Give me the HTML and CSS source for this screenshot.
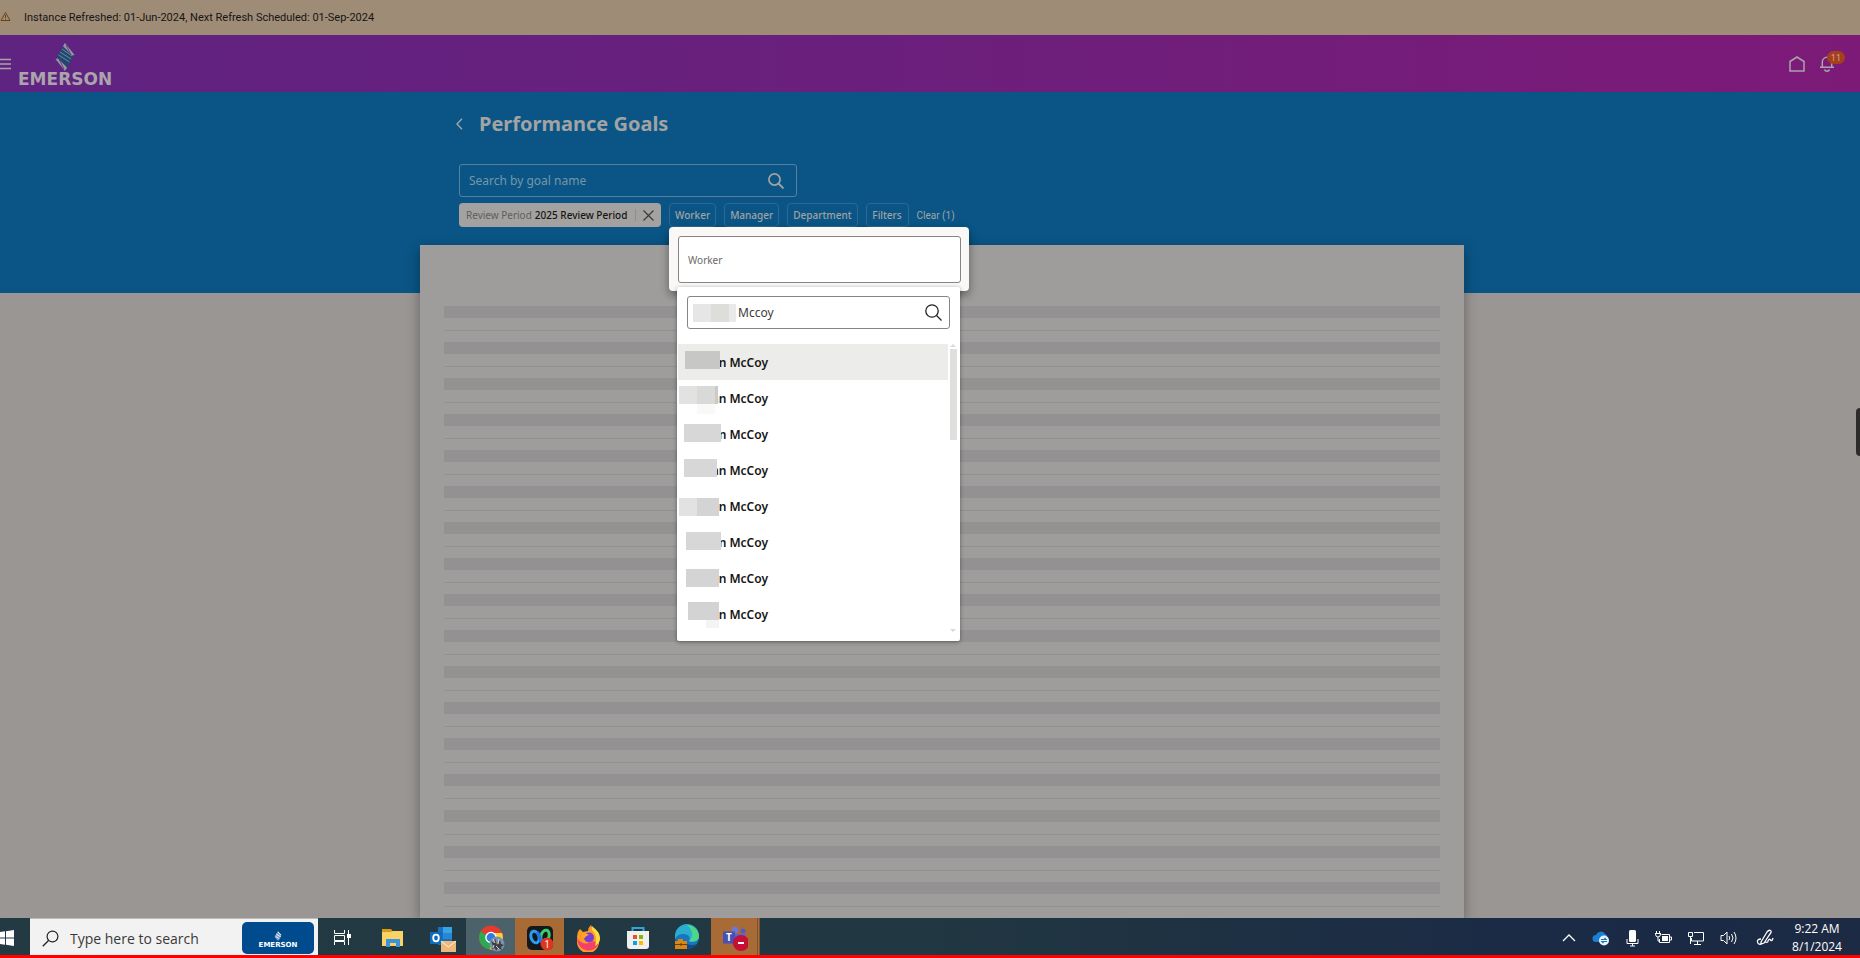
FILE: index.html
```html
<!DOCTYPE html>
<html lang="en">
<head>
    <meta charset="UTF-8">
    <meta name="viewport" content="width=device-width, initial-scale=1.0">
    <title>Performance Goals</title>
    <link rel="stylesheet" href="styles.css">
</head>
<body>

    <!-- Instance notice -->
    <div class="notice">
        <svg class="notice-icon" width="11" height="11" viewBox="0 0 11 11"><path d="M5.500 .5L10 8.500H1Z" fill="none" stroke="#6b4312"/><path d="M5.500 3v3M5.500 6.700v1" stroke="#6b4312"/></svg>
        <span>Instance Refreshed: 01-Jun-2024, Next Refresh Scheduled: 01-Sep-2024</span>
    </div>

    <!-- Global header -->
    <header class="topbar">
        <button class="icon-btn menu-btn" aria-label="Menu">
            <svg width="11" height="12" viewBox="0 0 11 12"><path d="M0 1.500h11M0 6h11M0 10.500h11" stroke="#a9a4ab" stroke-width="1.400"/></svg>
        </button>
        <a class="logo" href="#" aria-label="Emerson">
            <svg width="20" height="28" viewBox="0 0 20 28">
                <path d="M10 0L19.500 12 10 28 .5 16Z" fill="#24466f"/>
                <path d="M10 0L19.500 12 17 12.500 8 3Z" fill="#9c98a2"/>
                <path d="M.5 16L3 15.500 12 24.500 10 28Z" fill="#9c98a2"/>
                <path d="M7 6l10 7M5 9l11 7M3.500 12l11 7" stroke="#5f8fa3"/>
                <path d="M11 2l5 10M4 16l5 10" stroke="#612280" stroke-width=".8"/>
            </svg>
            <span class="logo-text">EMERSON</span>
        </a>
        <div class="topbar-actions">
            <button class="icon-btn" aria-label="Home">
                <svg width="16" height="16" viewBox="0 0 16 16"><path d="M1 5.500L8 1l7 4.500V15H1Z" fill="none" stroke="#aaa3aa" stroke-width="1.500"/></svg>
            </button>
            <button class="icon-btn bell-btn" aria-label="Notifications">
                <svg width="14" height="16" viewBox="0 0 14 16"><path d="M0 11.300h14M2.300 11V6a4.700 4.700 0 0 1 9.400 0v5" fill="none" stroke="#aaa3aa" stroke-width="1.500"/><path d="M4.500 13.500a2.600 2.300 0 0 0 5 0" fill="none" stroke="#aaa3aa" stroke-width="1.500"/></svg>
                <span class="badge">11</span>
            </button>
        </div>
    </header>

    <main class="page">
        <section class="hero">
            <div class="hero-inner">
                <div class="title-row">
                    <button class="icon-btn" aria-label="Back">
                        <svg width="8" height="12" viewBox="0 0 8 12"><path d="M7 .8L2 6l5 5.200" fill="none" stroke="#a2a3a3" stroke-width="1.400"/></svg>
                    </button>
                    <h1>Performance Goals</h1>
                </div>

                <div class="goal-search">
                    <input type="text" aria-label="Search by goal name" placeholder="Search by goal name">
                    <svg width="16" height="16" viewBox="0 0 16 16"><circle cx="6.500" cy="6.500" r="5.600" fill="none" stroke="#a2a3a3" stroke-width="1.700"/><path d="M10.500 10.500l5 5" stroke="#a2a3a3" stroke-width="1.800"/></svg>
                </div>

                <!-- Filter chips -->
                <div class="chips">
                    <div class="chip-selected">
                        <span class="chip-label">Review Period</span>
                        <span class="chip-value">2025 Review Period</span>
                        <button class="icon-btn chip-close" aria-label="Remove">
                            <svg width="11" height="11" viewBox="0 0 11 11"><path d="M.5.5l10 10M10.500.5l-10 10" stroke="#3b3a39" stroke-width="1.200"/></svg>
                        </button>
                    </div>
                    <div class="chip-anchor">
                        <button class="chip">Worker</button>

                        <!-- Worker popup -->
                        <div class="popup">
                            <label class="worker-field" for="worker-search">Worker</label>
                            <div class="dropdown">
                                <div class="worker-search">
                                    <span class="blur blur-input"></span>
                                    <input type="text" id="worker-search" value="Mccoy">
                                    <svg width="17" height="17" viewBox="0 0 17 17"><circle cx="7" cy="7" r="6.200" fill="none" stroke="#222" stroke-width="1.300"/><path d="M11.500 11.500l5 5" stroke="#222" stroke-width="1.300"/></svg>
                                </div>
                                <div class="results">
                                    <ul>
                                        <li class="active"><span class="name">n McCoy</span><span class="blur b1"></span></li>
                                        <li><span class="name">an McCoy</span><span class="blur b2"></span></li>
                                        <li><span class="name">n McCoy</span><span class="blur b3"></span></li>
                                        <li><span class="name">an McCoy</span><span class="blur b4"></span></li>
                                        <li><span class="name">n McCoy</span><span class="blur b5"></span></li>
                                        <li><span class="name">n McCoy</span><span class="blur b6"></span></li>
                                        <li><span class="name">n McCoy</span><span class="blur b7"></span></li>
                                        <li><span class="name">n McCoy</span><span class="blur b8"></span></li>
                                    </ul>
                                    <div class="scrollbar">
                                        <span class="arrow-up"></span>
                                        <span class="thumb"></span>
                                        <span class="arrow-down"></span>
                                    </div>
                                </div>
                            </div>
                        </div>
                    </div>
                    <button class="chip">Manager</button>
                    <button class="chip">Department</button>
                    <button class="chip">Filters</button>
                    <button class="clear">Clear (1)</button>
                </div>
            </div>
        </section>

        <!-- Loading skeleton -->
        <section class="sheet">
            <div class="row"></div>
            <div class="row"></div>
            <div class="row"></div>
            <div class="row"></div>
            <div class="row"></div>
            <div class="row"></div>
            <div class="row"></div>
            <div class="row"></div>
            <div class="row"></div>
            <div class="row"></div>
            <div class="row"></div>
            <div class="row"></div>
            <div class="row"></div>
            <div class="row"></div>
            <div class="row"></div>
            <div class="row"></div>
            <div class="row"></div>
        </section>
        <div class="side-handle"></div>
    </main>

    <!-- Taskbar -->
    <footer class="taskbar">
        <button class="start" aria-label="Start">
            <svg width="14" height="16" viewBox="0 0 14 16"><path d="M0 2l5-.7v6.200H0ZM6 1.200L14 0v7.500H6ZM0 8.500h5v6.200L0 14ZM6 8.500h8V16l-8-1.200Z" fill="#fff"/></svg>
        </button>
        <div class="task-search">
            <svg width="17" height="17" viewBox="0 0 17 17"><circle cx="10.500" cy="6.500" r="5.400" fill="none" stroke="#222" stroke-width="1.200"/><path d="M6.500 10.500L.8 16.200" stroke="#222" stroke-width="1.300"/></svg>
            <input type="text" aria-label="Type here to search" placeholder="Type here to search">
            <div class="tile">
                <svg width="8" height="10" viewBox="0 0 8 10"><path d="M4 0l3.500 4L4 10 .5 6Z" fill="#7d9cc9"/><path d="M2 3l5 3M1.500 5l4 3M4 1l3 3" stroke="#fff" stroke-width=".8"/></svg>
                <span>EMERSON</span>
            </div>
        </div>

        <div class="apps">
            <button class="app" aria-label="Task View">
                <svg width="28" height="28" viewBox="0 0 28 28"><g fill="none" stroke="#fff"><path d="M4.500 6v3.500h10V6M4.500 21v-3.500h10V21M4.500 11.500h10v5h-10zM18.500 6v15"/></g><path d="M17 10h4v4h-4z" fill="#fff"/></svg>
            </button>
            <button class="app" aria-label="File Explorer">
                <svg width="28" height="28" viewBox="0 0 28 28"><path d="M3 5h9l1.500 2H24v4H3Z" fill="#dd9a12"/><path d="M3 8h9l2-1h10v15H3Z" fill="#fbd266"/><path d="M7 23v-8h14v8h-4v-4h-6v4Z" fill="#3b93da"/></svg>
            </button>
            <button class="app" aria-label="Outlook">
                <svg width="28" height="28" viewBox="0 0 28 28"><path d="M10 3h14v18H10Z" fill="#1a6fc0"/><path d="M15 3h9v6h-9Z" fill="#35a5e6"/><path d="M15 9h9v6h-9Z" fill="#2a86d2"/><path d="M2 8h12v12H2Z" fill="#0f6cbd"/><ellipse cx="8" cy="14" rx="2.800" ry="3.300" fill="none" stroke="#fff" stroke-width="1.800"/><path d="M13 17h15v11H13Z" fill="#efb878"/><path d="M13 17l7.500 6L28 17" fill="none" stroke="#fff3df"/></svg>
            </button>
            <button class="app app-open" aria-label="Chrome">
                <svg width="28" height="28" viewBox="0 0 28 28"><circle cx="14" cy="13.500" r="12" fill="#e33b2e"/><path d="M14 13.500L3.600 7.500A12 12 0 0 0 13 25.500Z" fill="#2da94f"/><path d="M14 13.500l-1 12A12 12 0 0 0 25 9H15Z" fill="#fdd23a"/><circle cx="14" cy="13.500" r="5.800" fill="#fff"/><circle cx="14" cy="13.500" r="4.400" fill="#2f7de1"/><circle cx="20" cy="20" r="7.500" fill="#7793a8"/><path d="M14 17l3 2 1-5 2 7 3-5 1 4 3 1-3 2 1 3-4-2-2 3-1-3-3 1 1-3Z" fill="#3f3c44"/><path d="M16 15l2 4M22 15l-1 5M19 22l3 3M17 21l-1 3" stroke="#d8cfc5"/></svg>
            </button>
            <button class="app app-alert" aria-label="Webex">
                <svg width="28" height="28" viewBox="0 0 28 28"><rect x="1" y="2" width="26" height="24" rx="5" fill="#15191c"/><ellipse cx="9" cy="13" rx="4" ry="6" transform="rotate(-18 9 13)" fill="none" stroke="#2b9df0" stroke-width="3"/><ellipse cx="19" cy="12" rx="4" ry="6" transform="rotate(18 19 12)" fill="none" stroke="#38cf6c" stroke-width="3"/><path d="M11 8q3 3 3 7 1 4 4 3" fill="none" stroke="#1f6df0" stroke-width="3"/><circle cx="21" cy="20" r="6.500" fill="#dd3620"/><text x="21" y="24" text-anchor="middle" font-size="10" fill="#fff">1</text></svg>
            </button>
            <button class="app" aria-label="Firefox">
                <svg width="28" height="28" viewBox="0 0 28 28"><path d="M5 5l3 3 5-1c0-3 2-5 3-6 1 3 3 4 5 5l1 2c2 3 3 6 2 10a11 11 0 0 1-22 0C2 12 2 8 5 5Z" fill="#ff9a25"/><path d="M2.500 12c0 3 1 5 4 6 4 3 8 1 12-1l5 3a11 11 0 0 1-21-3Z" fill="#f4416a"/><path d="M17 2c3 3 8 6 8 12 0 5-3 7-5 8 2-7 1-12-3-16Z" fill="#ffdb3f"/><circle cx="14" cy="13.500" r="5" fill="#7a3fd0"/><path d="M7 10c3-2 6 0 7 1-2 1-4 1-4 3-2 0-3-2-3-4Z" fill="#ffa62b"/></svg>
            </button>
            <button class="app" aria-label="Store">
                <svg width="28" height="28" viewBox="0 0 28 28"><path d="M8.500 8V4h11v4" fill="none" stroke="#2fa5de" stroke-width="2"/><path d="M3 7h22v15q0 3-3 3H6q-3 0-3-3Z" fill="#efefef"/><path d="M9 11h4v4H9Z" fill="#f25022"/><path d="M15 11h4v4h-4Z" fill="#7fba00"/><path d="M9 17h4v4H9Z" fill="#00a4ef"/><path d="M15 17h4v4h-4Z" fill="#ffb900"/></svg>
            </button>
            <button class="app" aria-label="Edge">
                <svg width="28" height="28" viewBox="0 0 28 28"><circle cx="14" cy="13" r="12" fill="#1676c4"/><path d="M2 12A12 12 0 0 1 26 12c0 6-7 7-10 5 2-3 0-7-5-7-4 0-7 1-9 5Z" fill="#2aaed0"/><path d="M14 1A12 12 0 0 1 26 13c-1 5-7 5-10 4 5-4 4-11-2-16Z" fill="#4fd58a"/><path d="M11 16c2 5 8 6 13 4-2 3-6 5-10 5-3-2-4-5-3-9Z" fill="#114a8b"/><path d="M5 17v-2h5v2M2 17h12v8H2Z" fill="#d98613"/><path d="M2 20.500h12M8 19v3" stroke="#6e3c07"/></svg>
            </button>
            <button class="app app-alert app-stack" aria-label="Teams">
                <svg width="28" height="28" viewBox="0 0 28 28"><circle cx="15" cy="6" r="3.500" fill="#6e78d4"/><circle cx="23" cy="7" r="2.500" fill="#5059c9"/><path d="M11 10h15v7q-2 6-8 6-6-1-7-6Z" fill="#5b64cc"/><path d="M3 7.500h12v12H3Z" fill="#4650b5"/><text x="9" y="17" text-anchor="middle" font-size="10" font-weight="700" fill="#fff">T</text><circle cx="21" cy="19" r="8" fill="#c50f35"/><path d="M18 19h6" stroke="#fff" stroke-width="2"/></svg>
            </button>
        </div>

        <div class="tray">
            <svg width="16" height="16" viewBox="0 0 16 16"><path d="M2 11l6-6 6 6" fill="none" stroke="#fff" stroke-width="1.300"/></svg>
            <svg width="18" height="16" viewBox="0 0 18 16"><path d="M4 12a3.500 3.500 0 0 1 0-7 5 5 0 0 1 9-1 3.500 3.500 0 0 1 2 5v3Z" fill="#1b7fd4"/><circle cx="12" cy="10.500" r="5" fill="#e8f2fa"/><path d="M9 9.500h5l-1.500-1.700M15 11.500h-5l1.500 1.700" fill="none" stroke="#1470b8" stroke-width="1.200"/></svg>
            <svg width="14" height="18" viewBox="0 0 14 18"><rect x="4" y="1" width="7" height="12" rx="1.500" fill="#fff"/><path d="M2 10v4.500h11V10M7.500 14v3M5 17h5" fill="none" stroke="#fff"/></svg>
            <svg width="18" height="16" viewBox="0 0 18 16"><path d="M7.500 4.500h8v8h-10V9M16 7h1.500v3H16M2.500 1v2M5.500 1v2M1 3.500h6M1.500 4q0 3 2.500 3t2.500-3M4 7v4h2" fill="none" stroke="#fff"/><path d="M8 6h6v5H8Z" fill="#fff"/></svg>
            <svg width="18" height="16" viewBox="0 0 18 16"><path d="M7 2.500h9.500v8.500h-12V8M10.500 11v3M7 14.500h7M1.500 2.500h4v4h-4ZM3.500 6.500V14" fill="none" stroke="#fff"/></svg>
            <svg width="18" height="16" viewBox="0 0 18 16"><path d="M1 5.500h2.500L7 2v12l-3.500-3.500H1Z" fill="none" stroke="#fff"/><path d="M9 6q1.500 2 0 4M11.500 4q3 4 0 8M14 2q4 6 0 12" fill="none" stroke="#fff"/></svg>
            <svg class="pen" width="18" height="18" viewBox="0 0 18 18"><path d="M5 13L11 3q2-2.500 3.500-1.500T14 5L8 14l-3 1ZM5 10q-4 0-3.500 3 .5 3 4 2M9 13q3 1 3-1 1-3 2.500-1t2.500-2" fill="none" stroke="#fff" stroke-width="1.300"/></svg>
        </div>
        <div class="clock">
            <span>9:22 AM</span>
            <span>8/1/2024</span>
        </div>
    </footer>

</body>
</html>
```

FILE: styles.css
```css
* {
    box-sizing: border-box;
}

body {
    margin: 0;
    height: 100vh;
    display: flex;
    flex-direction: column;
    overflow: hidden;
    background: #9a9694;
    font-family: "Noto Sans", "Open Sans", sans-serif;
    font-size: 10px;
    color: #161513;
}

button {
    font-family: inherit;
    background: none;
    border: 0;
    padding: 0;
}

input {
    font-family: inherit;
    border: 0;
    outline: 0;
    padding: 0;
    background: none;
    min-width: 0;
}

svg {
    display: block;
    flex: none;
}

.icon-btn {
    display: flex;
    align-items: center;
    justify-content: center;
}

/* Notice */
.notice {
    flex: none;
    height: 35px;
    display: flex;
    align-items: center;
    gap: 13px;
    background: #9e8c77;
    font-family: Roboto, sans-serif;
    font-size: 11px;
}

/* Header */
.topbar {
    flex: none;
    height: 57px;
    display: flex;
    align-items: center;
    padding-right: 16px;
    background: linear-gradient(90deg, #5f2381, #6c1f7c 50%, #7d1a78);
}

.logo {
    display: flex;
    flex-direction: column;
    align-items: center;
    margin-left: 7px;
    padding-top: 3px;
    text-decoration: none;
}

.logo-text {
    font-family: "DejaVu Sans", sans-serif;
    font-weight: 700;
    font-size: 17px;
    line-height: 16px;
    color: #aaa4ac;
}

.topbar-actions {
    display: flex;
    align-items: center;
    gap: 15px;
    margin-left: auto;
    padding-right: 10px;
}

.bell-btn {
    position: relative;
}

.badge {
    position: absolute;
    left: 7px;
    top: -5px;
    width: 18px;
    height: 13px;
    border-radius: 7px;
    background: #a5401b;
    color: #c2aaa0;
    font-size: 9px;
    line-height: 13px;
}

/* Page */
.page {
    flex: 1;
    min-height: 0;
    position: relative;
    display: flex;
    flex-direction: column;
}

.hero {
    flex: none;
    padding: 0 0 48px 24px;
    background: #0a5585;
}

.hero-inner {
    max-width: 1044px;
    height: 153px;
    margin: 0 auto;
    padding: 16px 36px 0 39px;
}

.title-row {
    display: flex;
    align-items: center;
    height: 32px;
    gap: 16px;
}

h1 {
    margin: 0;
    font-size: 20px;
    line-height: 32px;
    color: #a2a3a3;
}

.title-row .icon-btn {
    margin-left: -4px;
}

.goal-search {
    display: flex;
    align-items: center;
    width: 338px;
    height: 33px;
    margin-top: 24px;
    padding: 0 12px 0 9px;
    border: 1px solid #56809c;
    border-radius: 3px;
}

.goal-search input {
    flex: 1;
    font-size: 12px;
    color: #a2a3a3;
}

.goal-search input::placeholder {
    color: #7596aa;
    opacity: 1;
}

.chips {
    display: flex;
    align-items: center;
    gap: 8px;
    margin-top: 6px;
}

.chip-selected {
    display: flex;
    align-items: center;
    width: 202px;
    height: 24px;
    padding: 0 7px;
    border-radius: 4px;
    background: #a3a2a1;
    white-space: nowrap;
}

.chip-label {
    color: #5f5e5d;
    margin-right: 3px;
}

.chip-value {
    font-weight: 500;
}

.chip-close {
    margin-left: auto;
    height: 12px;
    padding-left: 7px;
    border-left: 1px solid #8f8e8d;
}

.chip {
    display: block;
    min-width: 43px;
    height: 24px;
    padding: 0 5px;
    border: 1px solid #2a6a93;
    border-radius: 4px;
    font-size: 10px;
    font-weight: 500;
    color: #a2a3a3;
}

.clear {
    font-family: Roboto, sans-serif;
    font-size: 10px;
    color: #a2a3a3;
}

/* Worker popup */
.chip-anchor {
    position: relative;
}

.popup {
    position: absolute;
    z-index: 2;
    top: 24px;
    left: 0;
    width: 300px;
    height: 64px;
    padding: 9px 8px 8px 9px;
    border-radius: 4px;
    background: #f9f8f6;
    box-shadow: 0 4px 10px rgba(0, 0, 0, 0.4);
}

.worker-field {
    display: flex;
    align-items: center;
    height: 47px;
    padding: 0 9px;
    border: 1px solid #868583;
    border-radius: 3px;
    background: #fff;
    color: #6b6967;
}

.dropdown {
    position: absolute;
    top: 60px;
    left: 8px;
    width: 283px;
    padding: 9px 2px 9px 1px;
    border-radius: 2px;
    background: #fff;
    box-shadow: 0 1px 4px rgba(0, 0, 0, 0.4);
}

.worker-search {
    position: relative;
    display: flex;
    align-items: center;
    height: 33px;
    margin: 0 8px 15px 9px;
    padding: 0 7px 0 50px;
    border: 1px solid #868583;
    border-radius: 3px;
}

.worker-search input {
    flex: 1;
    font-size: 12px;
    color: #3d3b39;
}

.results {
    display: flex;
}

.results ul {
    flex: 1;
    margin: 0;
    padding: 0;
    list-style: none;
}

.results li {
    position: relative;
    height: 36px;
    background: #fff;
}

.results .active {
    background: #ececea;
}

.name {
    display: block;
    width: 90px;
    font-size: 12px;
    font-weight: 600;
    line-height: 38px;
    text-align: right;
    white-space: nowrap;
}

/* Obscured first names */
.blur {
    position: absolute;
    height: 18px;
    top: 7px;
    left: 6px;
    width: 33px;
    background: #d7d7d7;
}

.blur-input {
    left: 5px;
    width: 43px;
    background: linear-gradient(90deg, #e6e6e6 18px, #ddddda 18px 36px, #e9e9e9 36px);
}

.b1 {
    left: 7px;
    width: 35px;
    background: #c7c7c5;
}

.b2 {
    top: 6px;
    left: 1px;
    width: 39px;
    background: linear-gradient(90deg, #e2e2e2 18px, #d9d9d8 18px 36px, #cacaca 36px);
}

.b2::after,
.b8::after {
    content: "";
    position: absolute;
    top: 18px;
    left: 18px;
    width: 18px;
    height: 10px;
    background: #f9f9f9;
}

.b3 {
    top: 8px;
    width: 37px;
}

.b5 {
    top: 10px;
    left: 1px;
    width: 40px;
    background: linear-gradient(90deg, #e2e2e2 18px, #d4d4d4 18px);
}

.b6 {
    top: 8px;
    left: 8px;
    width: 35px;
}

.b7 {
    top: 9px;
    left: 8px;
    background: #d4d4d4;
}

.b8 {
    top: 6px;
    left: 10px;
    width: 31px;
    background: #d3d3d3;
}

.b8::after {
    width: 13px;
    height: 8px;
    background: #f4f4f4;
}

.scrollbar {
    display: flex;
    flex-direction: column;
    align-items: center;
    width: 10px;
}

.arrow-up,
.arrow-down {
    border: 3px solid transparent;
    border-top-width: 0;
    border-bottom-color: #d9d9d8;
}

.arrow-down {
    margin-top: auto;
    border-width: 3px 3px 0;
    border-color: #d9d9d8 transparent transparent;
}

.thumb {
    width: 7px;
    height: 91px;
    margin-top: 2px;
    background: #dfdfde;
}

/* Loading skeleton */
.sheet {
    flex: 1;
    min-height: 0;
    overflow: hidden;
    align-self: center;
    width: calc(100% - 24px);
    max-width: 1044px;
    margin: -48px 0 0 24px;
    padding: 61px 24px 0;
    background: #9e9d9b;
    box-shadow: 0 4px 12px rgba(0, 0, 0, 0.35);
}

.row {
    height: 25px;
    margin-bottom: 11px;
    border-top: 12px solid #939192;
    border-bottom: 1px solid #92918f;
}

.side-handle {
    position: absolute;
    right: 0;
    top: 316px;
    width: 4px;
    height: 48px;
    border-radius: 4px 0 0 4px;
    background: #2e2c2a;
}

/* Taskbar */
.taskbar {
    position: relative;
    flex: none;
    height: 40px;
    display: flex;
    align-items: stretch;
    border-bottom: 3px solid #f00;
    background: linear-gradient(90deg, #233a43, #213741 50%, #1b2b45 80%, #1c2a44);
    font-family: "Open Sans", sans-serif;
}

.start {
    display: flex;
    align-items: center;
    width: 30px;
    padding-top: 3px;
}

.task-search {
    display: flex;
    align-items: center;
    width: 288px;
    padding: 2px 4px 0 12px;
    border-top: 1px solid #bbb;
    background: #f2f2f2;
}

.task-search input {
    flex: 1;
    margin-left: 11px;
    font-size: 14px;
}

.task-search input::placeholder {
    color: #3a3a3a;
    opacity: 1;
}

.tile {
    display: flex;
    flex-direction: column;
    align-items: center;
    justify-content: center;
    width: 72px;
    height: 32px;
    padding-top: 4px;
    border-radius: 5px;
    background: #004b8d;
    color: #fff;
    font-family: "DejaVu Sans", sans-serif;
    font-size: 7px;
    font-weight: 700;
    line-height: 9px;
}

.apps {
    display: flex;
    margin-left: 1px;
}

.app {
    display: flex;
    align-items: center;
    justify-content: center;
    width: 49px;
    padding-top: 3px;
}

.app-open {
    background: #4c626a;
}

.app-alert {
    background: #a86b35;
}

.app-stack {
    border-right: 3px double #7d5433;
}

.tray {
    display: flex;
    align-items: center;
    gap: 15px;
    margin-left: auto;
    padding-top: 3px;
}

.pen {
    margin-left: 3px;
}

.clock {
    display: flex;
    flex-direction: column;
    align-items: center;
    width: 86px;
    padding-top: 2px;
    color: #fff;
    font-size: 12px;
    line-height: 18px;
}
```
